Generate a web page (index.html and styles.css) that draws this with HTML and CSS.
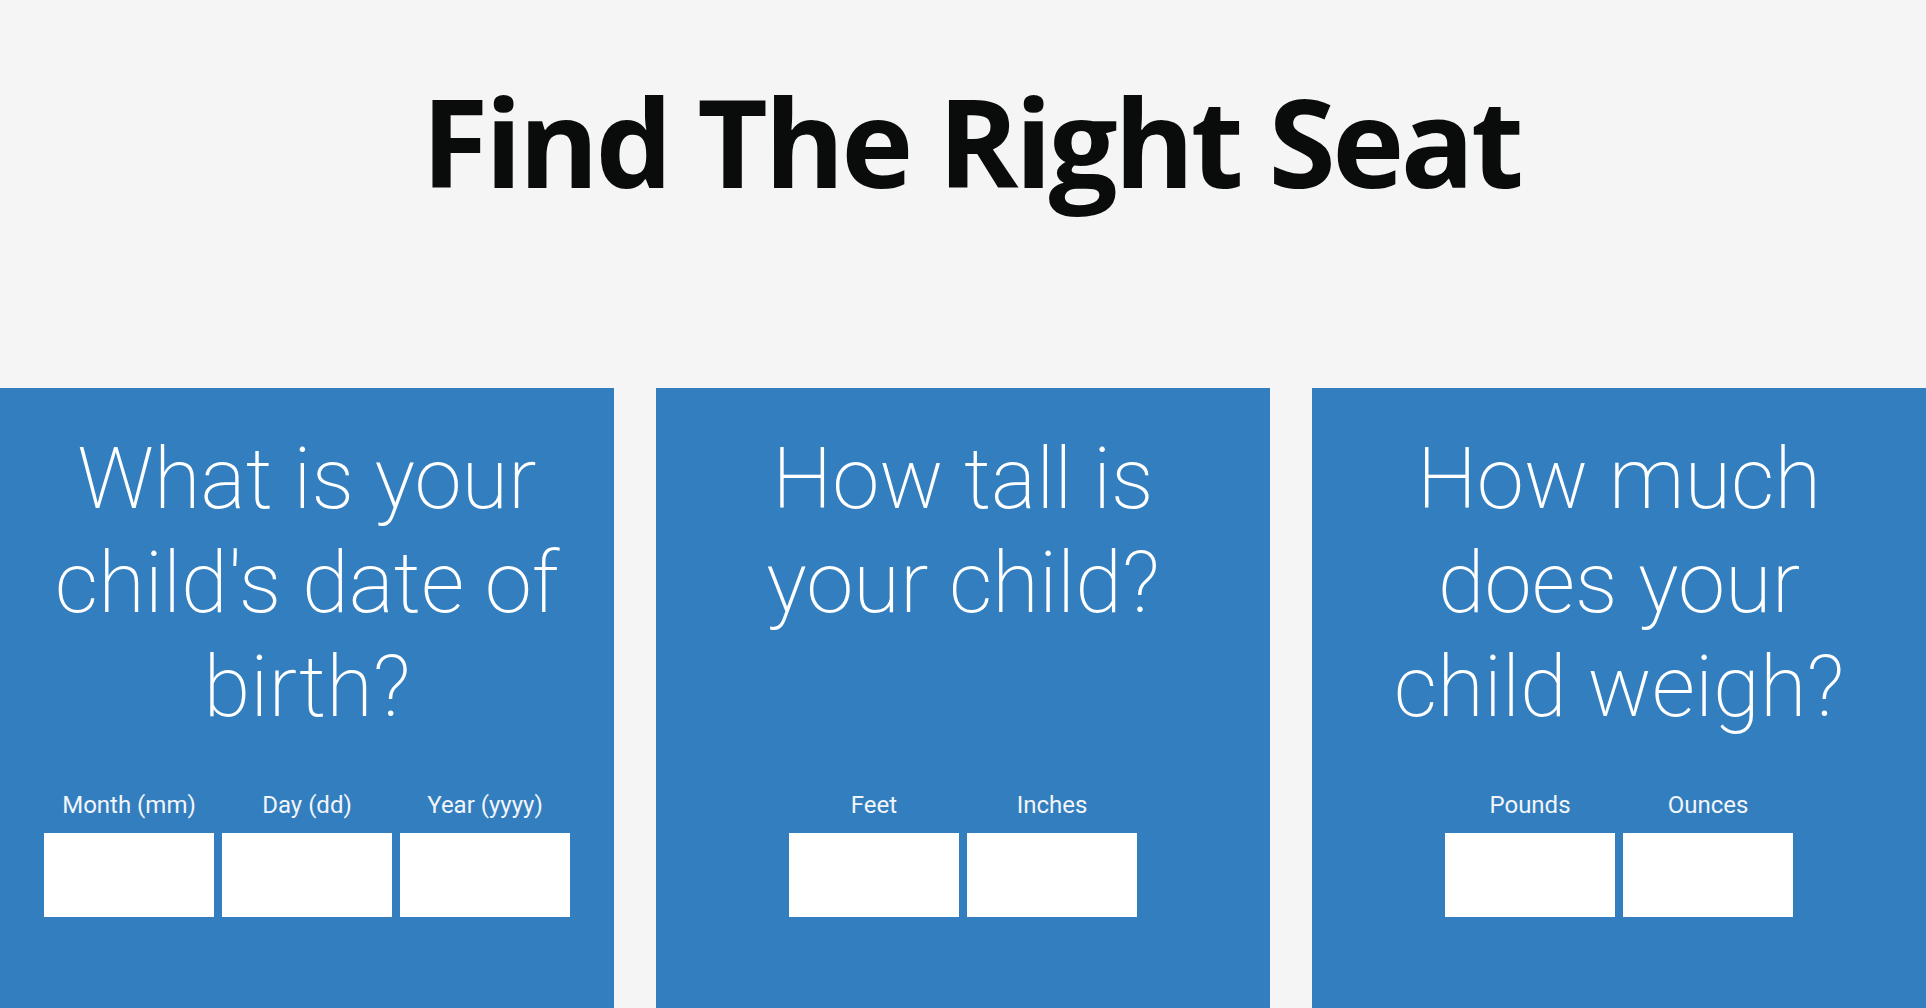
FILE: index.html
```html
<!DOCTYPE html>
<html>
  <head>
    <meta charset="UTF-8">
    <title>Find The Right Seat</title>
    <meta name="viewport" content="width=device-width, initial-scale=1.0">
    <link rel="stylesheet" href="styles.css">
  </head>
  <body>
    <header class="page-header">
      <h1>Find The Right Seat</h1>
    </header>

    <div class="questions">
      <div class="question">
        <h2>What is your child's date of birth?</h2>
        <div class="fields">
          <label class="field">
            <span>Month (mm)</span>
            <input type="text">
          </label>
          <label class="field">
            <span>Day (dd)</span>
            <input type="text">
          </label>
          <label class="field">
            <span>Year (yyyy)</span>
            <input type="text">
          </label>
        </div>
      </div>

      <div class="question">
        <h2>How tall is your child?</h2>
        <div class="fields">
          <label class="field">
            <span>Feet</span>
            <input type="text">
          </label>
          <label class="field">
            <span>Inches</span>
            <input type="text">
          </label>
        </div>
      </div>

      <div class="question">
        <h2>How much does your child weigh?</h2>
        <div class="fields">
          <label class="field">
            <span>Pounds</span>
            <input type="text">
          </label>
          <label class="field">
            <span>Ounces</span>
            <input type="text">
          </label>
        </div>
      </div>
    </div>
  </body>
</html>
```

FILE: styles.css
```css
body {
  margin: 0;
  background-color: #f5f5f5;
  font-family: Roboto, "Liberation Sans", sans-serif;
  overflow: hidden;
}
.page-header {
  height: 388px;
  box-sizing: border-box;
  padding-top: 80px;
  text-align: center;
}
.page-header h1 {
  margin: 0;
  padding-left: 16px;
  font-family: "Open Sans", "Liberation Sans", sans-serif;
  font-weight: 700;
  font-size: 122px;
  line-height: 122px;
  letter-spacing: -3.5px;
  color: #0a0c0b;
}
.questions {
  display: flex;
  gap: 42px;
}
.question {
  flex: 1;
  height: 700px;
  box-sizing: border-box;
  padding-top: 39px;
  background-color: #337ebe;
  color: white;
  text-align: center;
}
.question h2 {
  margin: 0;
  padding: 0 30px;
  height: 312px;
  font-size: 85px;
  font-weight: 200;
  line-height: 104px;
}
.fields {
  display: flex;
  justify-content: center;
  gap: 8px;
  margin-top: 51px;
}
.field {
  display: flex;
  flex-direction: column;
  align-items: center;
  gap: 13px;
}
.field span {
  font-size: 24px;
  line-height: 30px;
  color: #f2f5fa;
}
.field input {
  width: 170px;
  height: 84px;
  box-sizing: border-box;
  border: none;
  background-color: white;
  font-size: 24px;
}
```
